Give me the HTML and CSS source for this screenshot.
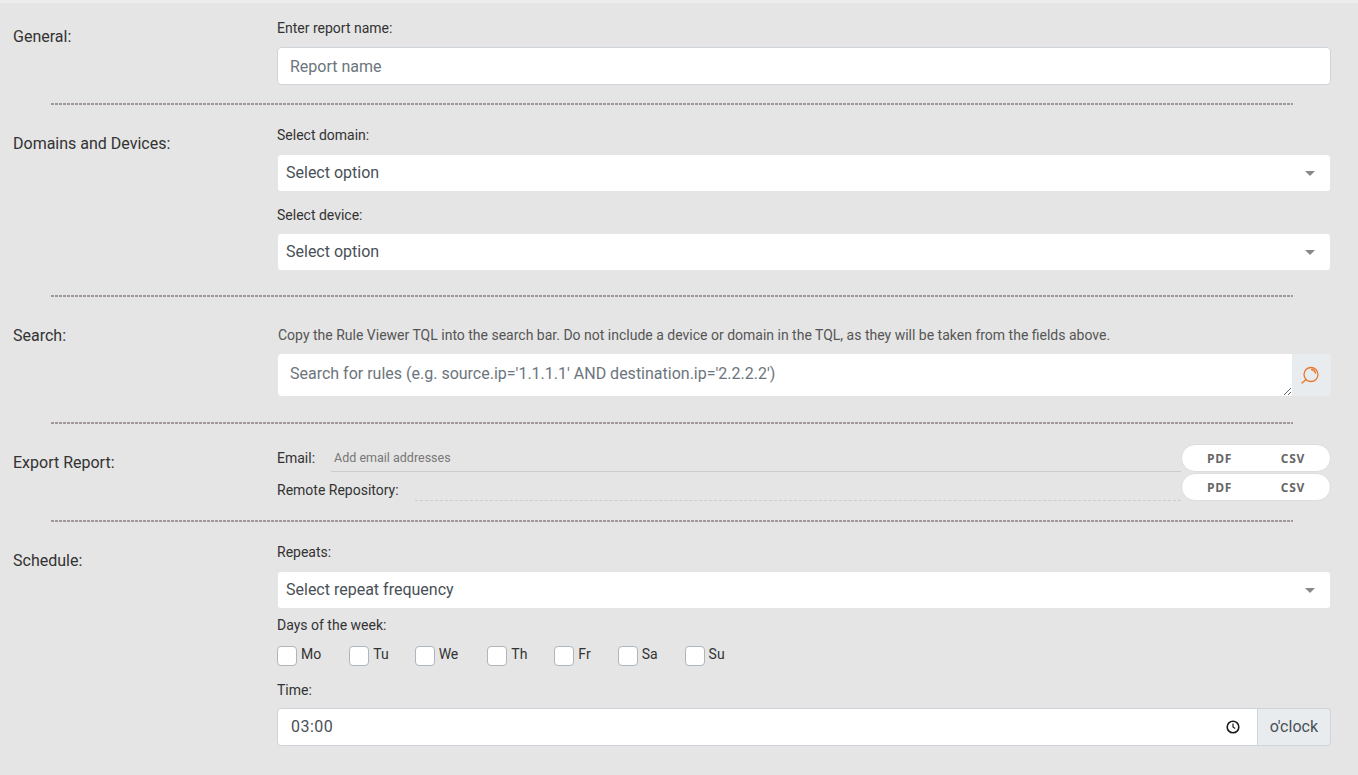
FILE: index.html

```html
<!DOCTYPE html>
<html lang="en">
<head>
    <meta charset="UTF-8">
    <meta name="viewport" content="width=device-width, initial-scale=1.0">
    <title>Report</title>
    <link rel="stylesheet" href="styles.css">
</head>
<body>

<!-- General -->
<section class="row row-first">
    <h2 class="row-title">General:</h2>
    <div class="row-body">
        <label class="field-label" for="report_name">Enter report name:</label>
        <input type="text" id="report_name" class="text-input" placeholder="Report name">
    </div>
</section>
<hr class="divider">

<!-- Domains and Devices -->
<section class="row row-domains">
    <h2 class="row-title">Domains and Devices:</h2>
    <div class="row-body">
        <label class="field-label" for="domain">Select domain:</label>
        <div class="select-wrap">
            <select id="domain" class="select-input"><option>Select option</option></select>
        </div>
        <label class="field-label label-next" for="device">Select device:</label>
        <div class="select-wrap">
            <select id="device" class="select-input"><option>Select option</option></select>
        </div>
    </div>
</section>
<hr class="divider">

<!-- Search -->
<section class="row row-search">
    <h2 class="row-title title-flush">Search:</h2>
    <div class="row-body">
        <p class="field-label hint">Copy the Rule Viewer TQL into the search bar. Do not include a device or domain in the TQL, as they will be taken from the fields above.</p>
        <div class="search-group">
            <textarea class="search-input" placeholder="Search for rules (e.g. source.ip='1.1.1.1' AND destination.ip='2.2.2.2')"></textarea>
            <button type="button" class="search-btn" aria-label="Search">
                <svg width="20" height="20" viewBox="0 0 20 20" fill="none" stroke="#e8762c" stroke-width="1.3" stroke-linecap="round">
                    <circle cx="10" cy="9.5" r="7"/>
                    <path d="M5 14.5 1 18"/>
                    <path d="M10.5 4.5a4.5 4.5 0 0 1 4 3.6"/>
                </svg>
            </button>
        </div>
    </div>
</section>
<hr class="divider">

<!-- Export Report -->
<section class="row row-export">
    <h2 class="row-title">Export Report:</h2>
    <div class="row-body">
        <div class="export-line">
            <label class="export-label" for="email">Email:</label>
            <input type="text" id="email" class="export-input" placeholder="Add email addresses">
            <div class="format-pill"><span>PDF</span><span>CSV</span></div>
        </div>
        <div class="export-line line-repo">
            <label class="export-label" for="repo">Remote Repository:</label>
            <input type="text" id="repo" class="export-input input-dashed">
            <div class="format-pill"><span>PDF</span><span>CSV</span></div>
        </div>
    </div>
</section>
<hr class="divider">

<!-- Schedule -->
<section class="row row-last">
    <h2 class="row-title">Schedule:</h2>
    <div class="row-body">
        <label class="field-label" for="repeats">Repeats:</label>
        <div class="select-wrap">
            <select id="repeats" class="select-input"><option>Select repeat frequency</option></select>
        </div>
        <p class="field-label label-days">Days of the week:</p>
        <div class="days">
            <label class="day day-mo"><input type="checkbox"><span>Mo</span></label>
            <label class="day day-tu"><input type="checkbox"><span>Tu</span></label>
            <label class="day day-we"><input type="checkbox"><span>We</span></label>
            <label class="day"><input type="checkbox"><span>Th</span></label>
            <label class="day"><input type="checkbox"><span>Fr</span></label>
            <label class="day"><input type="checkbox"><span>Sa</span></label>
            <label class="day"><input type="checkbox"><span>Su</span></label>
        </div>
        <label class="field-label label-time" for="time">Time:</label>
        <div class="time-group">
            <div class="time-box">
                <input type="text" id="time" class="time-input" value="03:00">
                <svg class="clock" width="14" height="14" viewBox="0 0 14 14" fill="none" stroke="#1a1a1a">
                    <circle cx="7" cy="7" r="5.8" stroke-width="1.6"/>
                    <path d="M7 3.6V7l2.2 1.4" stroke-width="1.2"/>
                </svg>
            </div>
            <span class="time-suffix">o'clock</span>
        </div>
    </div>
</section>

</body>
</html>
```

FILE: styles.css

```css
:root {
    --page-bg: #e5e5e5;
    --text-color: #333;
    --input-text: #495057;
    --placeholder: #6c757d;
    --border-color: #ced4da;
    --addon-bg: #e9ecef;
}

* {
    box-sizing: border-box;
}

body {
    margin: 0;
    height: 775px;
    overflow: hidden;
    font-family: Roboto, Arial, sans-serif;
    color: var(--text-color);
    background-color: var(--page-bg);
    border-top: 3px solid #ededed;
}

.row {
    display: flex;
    padding: 20px 27px 18px 13px;
}

.row-first {
    padding-top: 15px;
}

.row-domains {
    padding-bottom: 24px;
}

.row-search {
    padding-top: 28px;
    padding-bottom: 26px;
}

.row-export {
    padding-top: 20px;
    padding-bottom: 19px;
}

.row-last {
    padding-bottom: 0;
}

.row-title {
    width: 264px;
    flex-shrink: 0;
    margin: 9px 0 0;
    font-size: 16px;
    font-weight: 400;
    line-height: 20px;
}

.title-flush {
    margin-top: 1px;
}

.row-body {
    flex: 1;
    min-width: 0;
}

.divider {
    height: 2px;
    margin: 0 65px 0 51px;
    border: 0;
    background: repeating-linear-gradient(to right, #a09898 0, #a09898 3px, transparent 3px, transparent 4px);
}

.field-label {
    display: block;
    margin: 0 0 9px;
    font-size: 14px;
    line-height: 20px;
}

.label-next {
    margin: 13px 0 8px;
}

.hint {
    padding-left: 1px;
    color: #555;
}

.text-input {
    display: block;
    width: 100%;
    height: 38px;
    padding: 0 12px;
    font: 16px Roboto, Arial, sans-serif;
    color: var(--input-text);
    background-color: white;
    border: 1px solid var(--border-color);
    border-radius: 4px;
}

.text-input::placeholder,
.search-input::placeholder {
    color: var(--placeholder);
    opacity: 1;
}

.select-wrap {
    position: relative;
}

.select-wrap::after {
    content: "";
    position: absolute;
    right: 16px;
    top: 17px;
    border-left: 5px solid transparent;
    border-right: 5px solid transparent;
    border-top: 5px solid #888;
    pointer-events: none;
}

.select-input {
    display: block;
    width: 100%;
    height: 38px;
    padding: 0 8px 1px;
    font: 16px Roboto, Arial, sans-serif;
    color: var(--input-text);
    background-color: white;
    background-clip: padding-box;
    border: 1px solid transparent;
    border-radius: 4px;
    appearance: none;
}

.search-group {
    display: flex;
    height: 42px;
    padding-left: 1px;
}

.search-input {
    flex: 1;
    min-width: 0;
    height: 42px;
    padding: 8px 12px;
    font: 16px/24px Roboto, Arial, sans-serif;
    color: var(--input-text);
    background-color: white;
    border: 0;
    border-radius: 4px 0 0 4px;
}

.search-btn {
    display: flex;
    align-items: center;
    justify-content: center;
    width: 39px;
    padding: 0 2px 0 0;
    background-color: var(--addon-bg);
    border: 0;
    border-radius: 0 4px 4px 0;
}

.export-line {
    display: flex;
    height: 28px;
}

.line-repo {
    margin-top: 1px;
}

.export-label {
    padding-top: 4px;
    margin-right: 16px;
    font-size: 14px;
    line-height: 20px;
    white-space: nowrap;
}

.line-repo .export-label {
    padding-top: 7px;
}

.export-input {
    flex: 1;
    min-width: 0;
    padding: 0 3px 1px;
    font: 12.5px Roboto, Arial, sans-serif;
    color: var(--input-text);
    background: transparent;
    border: 0;
    border-bottom: 1px solid #ccc;
    border-radius: 0;
}

.export-input::placeholder {
    color: #777;
    opacity: 1;
}

.input-dashed {
    height: 28px;
    border-bottom: 1px dashed #ccc;
}

.format-pill {
    display: flex;
    justify-content: space-between;
    align-items: center;
    width: 150px;
    height: 28px;
    padding: 1px 25px 0;
    font-family: "Open Sans", Arial, sans-serif;
    font-size: 12px;
    font-weight: 700;
    letter-spacing: 0.7px;
    color: #666;
    background-color: white;
    border: 1px solid #ddd;
    border-radius: 14px;
}

.label-days {
    margin: 6px 0 11px;
}

.days {
    display: flex;
    height: 20px;
}

.day {
    display: flex;
    align-items: flex-start;
    margin-right: 27px;
    font-size: 14px;
    line-height: 16px;
}

.day-mo {
    margin-right: 28px;
}

.day-tu {
    margin-right: 26px;
}

.day-we {
    margin-right: 29px;
}

.day span {
    margin-left: 4px;
}

.day input {
    width: 20px;
    height: 20px;
    margin: 0;
    background-color: white;
    border: 1px solid #adb5bd;
    border-radius: 4px;
    appearance: none;
}

.label-time {
    margin: 14px 0 8px;
}

.time-group {
    display: flex;
    height: 38px;
}

.time-box {
    display: flex;
    flex: 1;
    align-items: center;
    padding-right: 17px;
    background-color: white;
    border: 1px solid var(--border-color);
    border-radius: 4px 0 0 4px;
}

.time-input {
    flex: 1;
    min-width: 0;
    padding: 0 13px 2px;
    font: 16px Roboto, Arial, sans-serif;
    letter-spacing: 0.5px;
    color: var(--input-text);
    background: transparent;
    border: 0;
}

.clock {
    flex-shrink: 0;
}

.time-suffix {
    display: flex;
    align-items: center;
    padding: 0 12px 2px;
    font-size: 16px;
    color: var(--input-text);
    background-color: var(--addon-bg);
    border: 1px solid var(--border-color);
    border-left: 0;
    border-radius: 0 4px 4px 0;
}
```
